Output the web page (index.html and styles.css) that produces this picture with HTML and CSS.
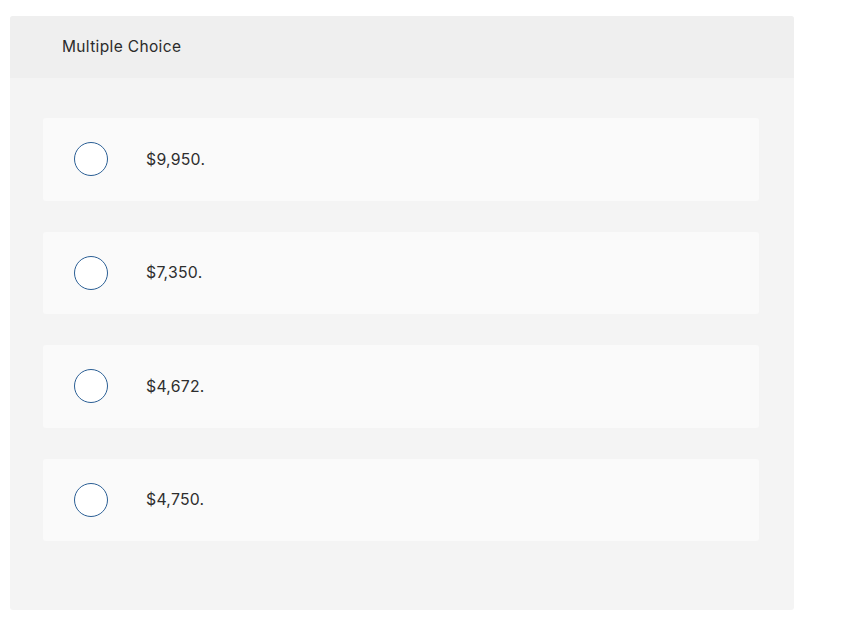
FILE: index.html
```html
<!DOCTYPE html>
<html>
<head>
<meta charset="utf-8">
<link rel="stylesheet" href="styles.css">
</head>
<body>
<div class="card">
  <div class="card-header">Multiple Choice</div>
  <div class="card-body">
    <div class="option"><span class="radio"></span><span class="label">$9,950.</span></div>
    <div class="option"><span class="radio"></span><span class="label">$7,350.</span></div>
    <div class="option"><span class="radio"></span><span class="label">$4,672.</span></div>
    <div class="option"><span class="radio"></span><span class="label">$4,750.</span></div>
  </div>
</div>
</body>
</html>
```
FILE: styles.css
```css
html, body {
  margin: 0;
  padding: 0;
  background: #ffffff;
}
body {
  font-family: "Inter", "Lato", "Liberation Sans", sans-serif;
  color: #333333;
}
.card {
  margin: 16px 0 0 10px;
  width: 784px;
  height: 594px;
  background: #f4f4f4;
  border-radius: 3px;
  overflow: hidden;
  display: flex;
  flex-direction: column;
}
.card-header {
  height: 62px;
  background: #efefef;
  display: flex;
  align-items: center;
  padding-left: 52px;
  padding-bottom: 2px;
  box-sizing: border-box;
  font-size: 15.5px;
  letter-spacing: 0.35px;
  color: #2b2b2b;
}
.card-body {
  padding: 40px 35px 0 33px;
  display: flex;
  flex-direction: column;
  gap: 31px;
}
.option {
  height: 82.5px;
  background: #fafafa;
  border-radius: 3px;
  display: flex;
  align-items: center;
  padding-left: 31px;
}
.radio {
  width: 32px;
  height: 32px;
  border: 1px solid #2b5f95;
  border-radius: 50%;
  background: #ffffff;
  flex: none;
}
.label {
  margin-left: 38px;
  font-size: 15.8px;
  letter-spacing: 0.25px;
  color: #2e2e2e;
}
```
